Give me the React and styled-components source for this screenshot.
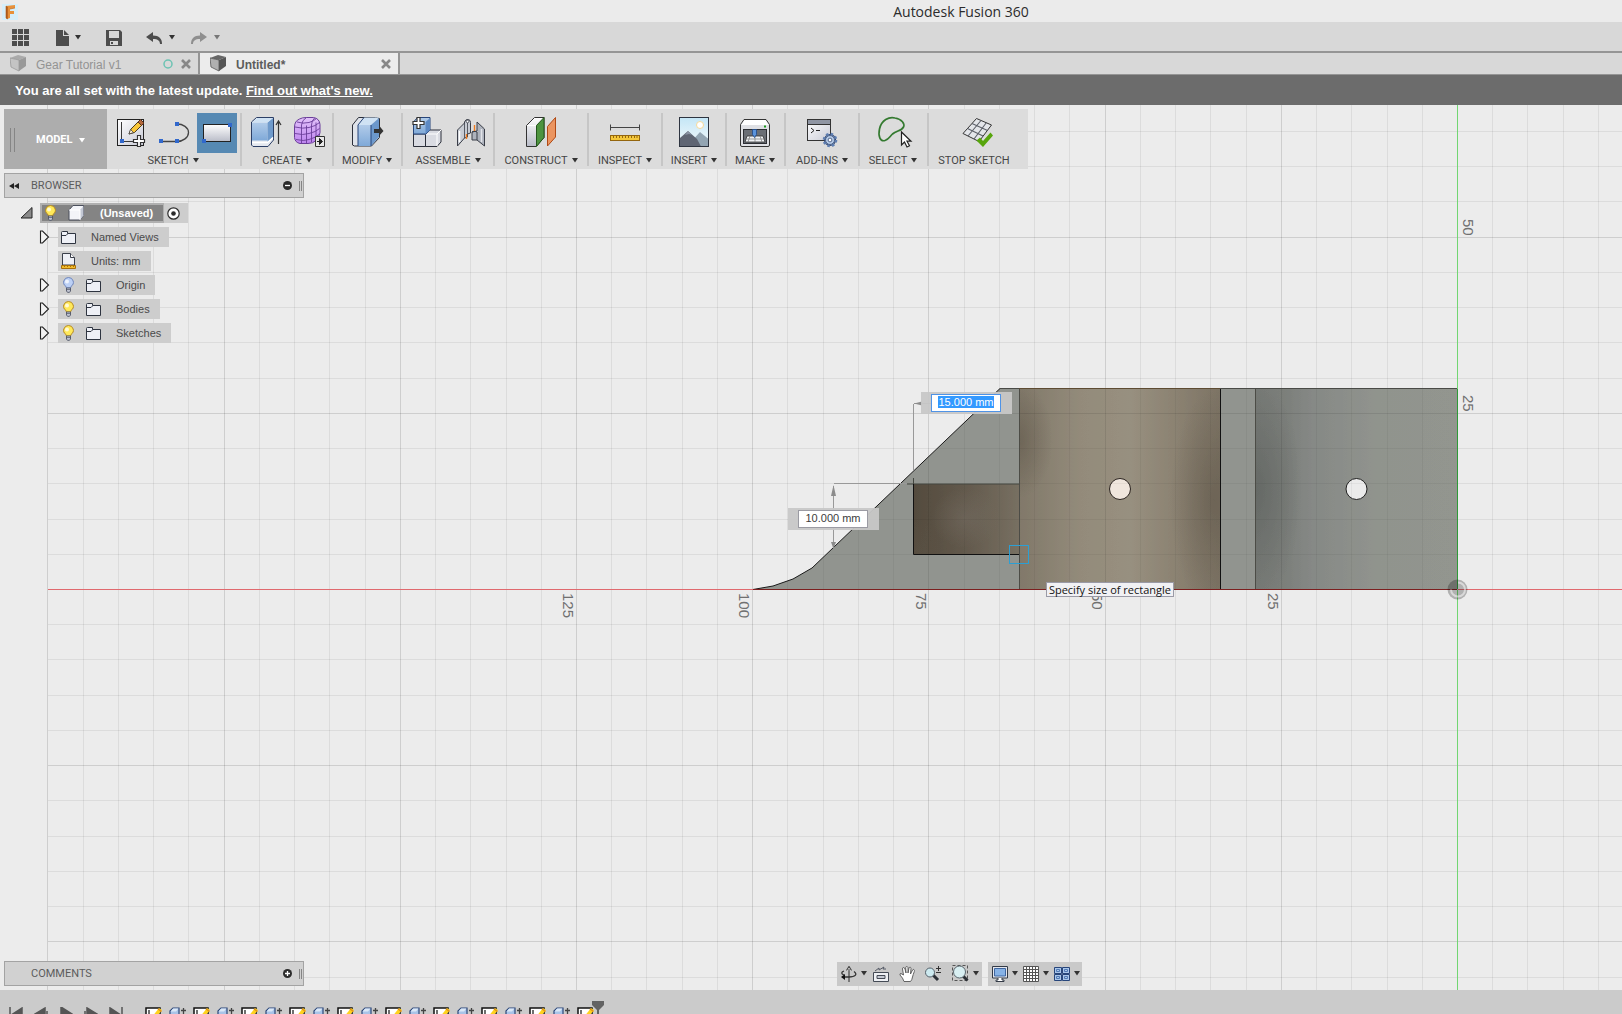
import React, { useEffect, useRef } from "react";
import styled, { createGlobalStyle } from "styled-components";

const GlobalStyle = createGlobalStyle`
  * { box-sizing: border-box; }
  body { margin: 0; font-family: "Liberation Sans", Arial, sans-serif; }
  button { font: inherit; color: inherit; background: none; border: 0; padding: 0; margin: 0; }
  svg { display: block; flex: none; }
`;

const Page = styled.div`
  display: flex;
  flex-direction: column;
  height: 100vh;
  overflow: hidden;
  background: #ececec;
`;

/* ---------- window chrome ---------- */

const TitleBar = styled.header`
  display: grid;
  grid-template-columns: 298px 1fr;
  align-items: center;
  height: 22px;
  background: #ebebeb;
  padding-left: 2px;
`;
const Title = styled.h1`
  margin: 0;
  text-align: center;
  font: 400 14px/24px "Open Sans", "Noto Sans", sans-serif;
  color: #2b2b2b;
`;
const QuickBar = styled.nav`
  display: flex;
  align-items: center;
  height: 29px;
  padding: 2px 0 0 12px;
  background: #d8d8d8;
`;
const QuickButton = styled.button`
  display: flex;
  align-items: center;
  gap: ${(p) => p.$gap || 6}px;
  margin-right: ${(p) => p.$after}px;
  color: ${(p) => (p.$muted ? "#8f8f8f" : "#4d4d4d")};
`;
const TabStrip = styled.div`
  display: flex;
  height: 24px;
  border-top: 2px solid #959595;
  border-bottom: 1px solid #959595;
  background: #d8d8d8;
`;
const Tab = styled.div`
  display: flex;
  align-items: center;
  width: 200px;
  padding: 0 7px 0 10px;
  border-right: 2px solid #959595;
  background: ${(p) => (p.$active ? "#ececec" : "#d8d8d8")};
`;
const TabName = styled.button`
  display: flex;
  align-items: center;
  gap: 9px;
  flex: 1;
  font-size: 12px;
  line-height: 20px;
  font-weight: ${(p) => (p.$active ? 700 : 400)};
  color: ${(p) => (p.$active ? "#5c5c5c" : "#939393")};
`;
const TabText = styled.span`
  padding-top: 3px;
`;
const CloseButton = styled.button`
  margin-left: 8px;
`;
const Banner = styled.p`
  margin: 0;
  padding-left: 15px;
  height: 30px;
  font-size: 13px;
  line-height: 31px;
  font-weight: 700;
  color: #fff;
  background: #6c6c6c;
  a { color: inherit; }
`;

/* ---------- modelling area ---------- */

const Workspace = styled.main`
  position: relative;
  flex: 1;
  min-height: 0;
  display: grid;
  grid-template: minmax(0, 1fr) / minmax(0, 1fr);
  overflow: hidden;
  > * { grid-area: 1 / 1; }
`;
const Scene = styled.svg`
  width: 100%;
  height: 100%;
  text { font: 15px "Liberation Sans", Arial, sans-serif; fill: #707070; }
`;
const Overlay = styled.div`
  display: flex;
  flex-direction: column;
  align-items: flex-start;
  padding: 4px;
  z-index: 1;
`;
const Ribbon = styled.div`
  display: flex;
  height: 60px;
  padding-right: 9px;
  margin-bottom: 4px;
  background: #dcdcdc;
`;
const ModeButton = styled.button`
  display: flex;
  align-items: center;
  width: 103px;
  padding: 2px 0 0 6px;
  gap: 6px;
  background: #adadad;
  color: #fff;
  font: 700 11px/14px Roboto, sans-serif;
`;
const Grip = styled.span`
  width: ${(p) => p.$w || 5}px;
  height: ${(p) => p.$h || 24}px;
  border: solid #858585;
  border-width: 0 1px;
`;
const ModeName = styled.span`
  margin-left: 15px;
`;
const Group = styled.section`
  display: flex;
  flex-direction: column;
  align-items: center;
  width: ${(p) => p.$width}px;
  margin: 4px 0 3px;
  padding-right: ${(p) => p.$width % 2}px;
  border-right: ${(p) => (p.$last ? "0" : "2px solid #c6c6c6")};
`;
const Tools = styled.div`
  display: flex;
  gap: 4px;
`;
const Tool = styled.button`
  width: 40px;
  height: 40px;
  background: ${(p) => (p.$on ? "#5689b3" : "transparent")};
`;
const GroupLabel = styled.button`
  display: flex;
  align-items: center;
  gap: 4px;
  font: 400 11px/15px Roboto, sans-serif;
  color: #454545;
  white-space: nowrap;
`;
const Panel = styled.div`
  display: flex;
  align-items: center;
  width: 300px;
  height: 25px;
  padding: 0 1px 0 4px;
  border: 1px solid #a3a3a3;
  background: #d1d1d1;
  font: 400 11px/14px Roboto, sans-serif;
  color: #5c5c5c;
`;
const PanelArrows = styled.button`
  width: 22px;
`;
const PanelName = styled.h2`
  flex: 1;
  margin: 0;
  font: inherit;
`;
const PanelToggle = styled.button`
  margin-right: 7px;
`;
const Tree = styled.ul`
  list-style: none;
  margin: 5px 0 0;
  padding: 0;
  display: flex;
  flex-direction: column;
  gap: 4px;
`;
const Row = styled.li`
  display: flex;
  align-items: center;
  height: 20px;
  padding-left: ${(p) => (p.$root ? 16 : 35)}px;
  font-size: 11px;
  line-height: 20px;
`;
const Expander = styled.button`
  width: ${(p) => (p.$root ? 20 : 19)}px;
  height: 14px;
`;
const RowBody = styled.div`
  display: flex;
  align-items: center;
  height: 20px;
  gap: 10px;
  padding-left: 3px;
  padding-right: 10px;
  background: #cdcdcd;
  color: #4a4a4a;
`;
const RowText = styled.span`
  margin-left: 5px;
`;
const RootBody = styled(RowBody)`
  gap: 0;
  padding: 2px 8px 2px 2px;
  background: linear-gradient(90deg, #b0b0b0 0 124px, #cdcdcd 124px);
`;
const RootName = styled.div`
  display: flex;
  align-items: center;
  gap: 10px;
  height: 16px;
  padding-right: 10px;
  padding-left: 1px;
  margin-right: 4px;
  background: #848484;
  color: #fff;
  font-weight: 700;
`;
const BottomRow = styled.div`
  display: flex;
  align-self: stretch;
  align-items: center;
  margin-top: auto;
`;
const NavArea = styled.div`
  display: flex;
  flex: 1;
  justify-content: center;
  gap: 6px;
  padding-right: 4px;
`;
const NavGroup = styled.div`
  display: flex;
  height: 24px;
  background: #c9c9c9;
`;
const NavButton = styled.button`
  display: flex;
  align-items: center;
  justify-content: center;
  gap: 4px;
  width: ${(p) => p.$width}px;
  padding-left: ${(p) => (p.$width > 26 ? 3 : 1)}px;
`;

/* On-canvas controls are pinned to the sketch origin, which follows the right edge. */
const Dimension = styled.label`
  position: absolute;
  z-index: 2;
  right: ${(p) => p.$right}px;
  top: ${(p) => p.$top}px;
  display: flex;
  width: 91px;
  height: 22px;
  padding: 2px 11px 2px 10px;
  background: rgba(200, 200, 200, 0.94);
`;
const DimensionInput = styled.input`
  width: 70px;
  height: 18px;
  padding: 0 0 2px;
  text-align: center;
  font: 11px/14px "Liberation Sans", Arial, sans-serif;
  color: #3c3c3c;
  background: #fff;
  border: 1px solid #9b9ba3;
  outline: none;
  &:focus { border-color: #4f93e6; }
  &::selection { background: #3399ff; color: #fff; }
`;
const Hint = styled.div`
  position: absolute;
  z-index: 2;
  right: 448px;
  top: 477px;
  height: 15px;
  padding: 0 2px;
  border: 1px solid #9a9aa6;
  background: #f1f1f4;
  color: #111;
  font: 11px/13px "Open Sans", "Noto Sans", sans-serif;
  white-space: nowrap;
`;

/* ---------- timeline ---------- */

const Timeline = styled.footer`
  display: flex;
  align-items: flex-start;
  height: 24px;
  padding: 11px 0 0 3px;
  overflow: hidden;
  background: #cbcbcb;
`;
const PlayButton = styled.button`
  display: flex;
  justify-content: center;
  width: 25px;
  padding-top: 6px;
`;
const Features = styled.div`
  display: flex;
  padding-left: 14px;
`;
const Feature = styled.button`
  display: flex;
  width: 24px;
  padding: 6px 0 0 3px;
`;
const Marker = styled.div`
  margin-left: -6px;
`;

/* ---------- glyphs ---------- */

const Caret = ({ color = "#333" }) => (
  <svg width="6" height="5"><path d="M0 0h6L3 4.5z" fill={color} /></svg>
);

const Cube = ({ front, side, top }) => (
  <svg width="17" height="17" viewBox="0 0 17 17">
    <path d="M0 3 8 0l8 2-7 3z" fill={top} />
    <path d="M0 3l9 2v11l-8-4z" fill={front} stroke={side} strokeWidth=".8" />
    <path d="M9 5l7-3v9l-7 5z" fill={side} />
  </svg>
);
const Cross = () => (
  <svg width="10" height="10"><path d="M1 1l8 8M9 1L1 9" stroke="#888" strokeWidth="2.6" /></svg>
);
const Bulb = ({ lit = true }) => (
  <svg width="15" height="16" viewBox="-1 0 15 16">
    <path d="M4 9.500C1.500 8 1.200 5.500 1.800 4A4.900 4.900 0 0 1 11.200 4c.7 2-.2 4.200-2.200 5.500L8.500 11h-4z"
      fill={lit ? "#ffe95a" : "#bcd0f5"} stroke={lit ? "#b78a22" : "#6f86bd"} />
    <ellipse cx="5" cy="4.500" rx="2" ry="2" fill="#fff" opacity=".75" />
    <path d="M4.500 11h4v3l-1 1.300h-2l-1-1.300z" fill="#c9cedb" stroke="#4f5566" strokeWidth=".9" />
    <path d="M4.500 12.600h4" stroke="#4f5566" strokeWidth=".8" />
  </svg>
);
const Folder = () => (
  <svg width="15" height="13" viewBox="0 0 15 13">
    <path d="M.5 12.500V1.500q0-1 1-1H6.500v2h8v10z" fill="#eef0f6" stroke="#2e3440" />
    <path d="M.5 4.500H5L7 2.500" fill="none" stroke="#2e3440" />
  </svg>
);
const UnitsIcon = () => (
  <svg width="15" height="16" viewBox="0 0 15 16">
    <path d="M1.500 12V.5h8l4 4V12z" fill="#eef0f6" stroke="#3a3f4a" />
    <path d="M9.500.5v4h4" fill="#fff" stroke="#3a3f4a" />
    <path d="M.5 12.500h14v3H.5z" fill="#f3bd2c" stroke="#a8700c" />
    <path d="M3.500 12v2M6.500 12v2M9.500 12v2M12.500 12v2" stroke="#a8700c" />
  </svg>
);
const BodyIcon = () => (
  <svg width="17" height="16" viewBox="0 0 17 16">
    <path d="M1 5l4-4.500h10.500v10L12 15H1z" fill="#f3f4f8" stroke="#4a4f5c" />
    <path d="M12 15V5l3.500-4v9.500z" fill="#c3c8d4" />
    <path d="M1 5h11V15" fill="none" stroke="#fff" />
  </svg>
);

const Dot = ({ x, y }) => <rect x={x - 2} y={y - 2} width="4" height="4" fill="#3168cc" />;
const Plus = ({ x, y }) => (
  <path transform={`translate(${x} ${y})`} d="M-1.500-5.500h3v4h4v3h-4v4h-3v-4h-4v-3h4z" fill="#fff" stroke="#333" strokeWidth="1.200" />
);

const Defs = () => (
  <defs>
    <linearGradient id="metal" x1="0" y1="0" x2="0" y2="1"><stop stopColor="#fff" /><stop offset="1" stopColor="#b9bcc8" /></linearGradient>
    <linearGradient id="paper" x1="0" y1="0" x2="1" y2="1"><stop stopColor="#fff" /><stop offset="1" stopColor="#c9cbd6" /></linearGradient>
    <linearGradient id="blue" x1="0" y1="0" x2="0" y2="1"><stop stopColor="#b1cbe9" /><stop offset="1" stopColor="#7fa9d8" /></linearGradient>
    <linearGradient id="violet" x1="0" y1="0" x2="0" y2="1"><stop stopColor="#e2c2fa" /><stop offset="1" stopColor="#bd83ef" /></linearGradient>
    <linearGradient id="sky" x1="0" y1="0" x2="0" y2="1"><stop stopColor="#c4e6f6" /><stop offset="1" stopColor="#f5fafc" /></linearGradient>
  </defs>
);

const art = {
  sketch: (
    <>
      <rect x="8.500" y="6.500" width="26" height="26" fill="url(#paper)" stroke="#222" />
      <path d="M12.500 9v19.500H31" fill="none" stroke="#3a3a3a" />
      <Dot x={13} y={28} />
      <path d="M20 21l2-5 9.500-9.500 3.500 3.500-9.500 9.500z" fill="#f8c63a" stroke="#4a3a20" />
      <path d="M29 9l2.500-2.500 3.500 3.500-2.500 2.500z" fill="#b5683c" stroke="#5a3420" />
      <path d="M20 21l1.500-4.500 3 3z" fill="#fff4da" stroke="#333" strokeWidth=".7" />
      <Plus x={30} y={28} />
    </>
  ),
  line: (
    <>
      <path d="M8 28.500h16c6 0 11.500-4 11.500-9S30 11 24 11" fill="none" stroke="#444" strokeWidth="1.300" />
      <Dot x={8} y={28} /><Dot x={24} y={28} /><Dot x={24} y={11} />
    </>
  ),
  rect: (
    <>
      <rect x="6.500" y="11.500" width="27" height="17" fill="url(#metal)" stroke="#222" />
      <Dot x={33} y={12} /><Dot x={7} y={28} />
    </>
  ),
  extrude: (
    <>
      <path d="M6.500 9l5-4.500h17V27l-5.500 6.500H8L6.500 32z" fill="#e4e8ef" stroke="#2c3f66" />
      <path d="M7 9.500h15.500v18H7z" fill="url(#blue)" />
      <path d="M22.500 9.500L28 5v19l-5.500 5z" fill="#6f9acb" />
      <path d="M7 9.500L12 5h16l-5.500 4.500z" fill="#cfe2f4" />
      <path d="M7 29.500h15.500l5.500-5" fill="none" stroke="#fff" strokeWidth="1.400" />
      <path d="M33.500 31V9M31 12l2.500-4 2.500 4" fill="none" stroke="#333" strokeWidth="1.200" />
    </>
  ),
  form: (
    <>
      <path d="M5.500 14q0-6 5-8 2.500-1.500 7-1.500h7q6 1 6.500 7v8q-.5 5-4 8-3 3-8 3h-8q-5-1-5.500-6z" fill="url(#violet)" stroke="#6a3d99" />
      <path d="M6 14q8 2 14 .5 7-1.500 10.500-5M6 20.500q8 2 14 0 7-1.500 10.500-5M7 26.500q8 2 13 0 7-2 10-5M12.500 12v18M17.500 12.500v18M22.500 12v17M27 9.500v17M8 9q6 2 12 .5 5-1.500 7.500-4M12.500 12q.5-5 5-7.500M22.500 12q0-4 3-7" fill="none" stroke="#6a3d99" strokeWidth=".9" />
      <path d="M26.500 23.500h9v10h-9z" fill="#e8e8e8" stroke="#333" />
      <path d="M28 28.500h5M30.500 25.500l3 3-3 3z" stroke="#222" fill="#222" />
    </>
  ),
  modify: (
    <>
      <path d="M5.500 12l6-7.500h17l4 1v19l-8 8.500h-17l-2-1z" fill="#dfe3ea" stroke="#2b2f3a" />
      <path d="M11 12h13v21H11z" fill="url(#blue)" />
      <path d="M11 12l6-7.500h15L24 12z" fill="#cfe2f4" />
      <path d="M24 12l8-7v19l-8 9z" fill="#6c98cc" />
      <path d="M11 33V12l6-7.500M24 33V12" fill="none" stroke="#27457a" />
      <path d="M27 16h5v-3.500l4.500 5.500-4.500 5v-3h-5z" fill="#333" />
    </>
  ),
  component: (
    <>
      <path d="M7.500 21h12v12.500h-12zM19.500 21l3.500-4h12v12l-4 4.500H19.500z" fill="#d9dbe2" stroke="#2b2f3a" />
      <path d="M19.500 21H31l4-4M31 21v12" fill="none" stroke="#fff" />
      <path d="M7.500 9l4-4.500h12.500V17l-4 4H7.500z" fill="url(#blue)" stroke="#27457a" />
      <path d="M19.500 9l4.500-4v12l-4.500 4z" fill="#5d8ac4" />
      <Plus x={12.500} y={10} />
    </>
  ),
  joint: (
    <>
      <path d="M7.500 17l7-7V9q1-3 4-2.500 2 .5 2 3V20l-3 1v3l-3 1-7 8z" fill="#c8ccd4" stroke="#3a3e48" />
      <path d="M9.500 18v11" stroke="#fff" strokeWidth="1.500" />
      <path d="M14.500 10v15M17.500 10v11" fill="none" stroke="#3a3e48" strokeWidth=".8" />
      <path d="M34.500 16l-7.500-7v9l-5 1v8h5l7.500 6z" fill="#aeb3bd" stroke="#3a3e48" />
      <path d="M22 19q2-2 5 0v8" fill="none" stroke="#3a3e48" />
      <path d="M31.500 16v13" stroke="#e2e4e9" strokeWidth="1.500" />
      <path d="M24.500 12v6M16.500 21v5" stroke="#ee7a1e" strokeWidth="1.400" />
      <circle cx="17.500" cy="8.500" r="1.300" fill="#fff" stroke="#3a3e48" strokeWidth=".8" />
    </>
  ),
  plane: (
    <>
      <path d="M5.500 12.500l8-8h9.500v20l-8 9H5.500z" fill="url(#metal)" stroke="#333" />
      <path d="M15.500 12.500l7.500-8v20l-7.500 9z" fill="#4d9440" stroke="#24551d" />
      <path d="M6 12.500h9" stroke="#fff" />
      <path d="M26.500 13.500l8-9V24l-8 9z" fill="#eb9560" stroke="#b04a16" />
    </>
  ),
  measure: (
    <>
      <path d="M5.500 11.500v6M34.500 11.500v6M6 14.500h28" stroke="#444" fill="none" />
      <rect x="5.500" y="22.500" width="29" height="5" fill="#f4c73a" stroke="#94660f" />
      <path d="M8.500 23v2M11.500 23v2M14.500 23v2M17.500 23v2M20.500 23v2M23.500 23v2M26.500 23v2M29.500 23v2M32 23v2" stroke="#94660f" />
    </>
  ),
  image: (
    <>
      <rect x="5.500" y="4.500" width="29" height="29" fill="url(#sky)" />
      <circle cx="26" cy="12" r="3.500" fill="#fff" stroke="#f6d998" />
      <path d="M17 29l9-10 8.500 7v7.500H15z" fill="#93a5b3" />
      <path d="M6 25l8-7 9 8 4 7.500H6z" fill="#5f6573" />
      <path d="M11 22l3-4 4 4-3-1z" fill="#8a93a3" />
      <rect x="5.500" y="4.500" width="29" height="29" fill="none" stroke="#2e3440" />
    </>
  ),
  print: (
    <>
      <path d="M9 6.500h22l3.500 5V32q0 1.500-1.500 1.500H7Q5.500 33.500 5.500 32V11.500z" fill="#dfe0e4" stroke="#333" />
      <path d="M9.500 7h21l3 5h-27z" fill="#fff" />
      <rect x="8.500" y="16.500" width="23" height="14" fill="#6a6e75" stroke="#2d2f34" />
      <path d="M12 23h16l2 6H10z" fill="#eff1f4" stroke="#333" strokeWidth=".8" />
      <path d="M11 26h18M15 23l-2 6M20 23v6M25 23l2 6" stroke="#777" strokeWidth=".7" />
      <path d="M17.500 16.500h4v5l-2 3-2-3z" fill="#5b94dd" stroke="#1f4a8c" strokeWidth=".8" />
      <path d="M29 12.500h2v2h-2z" fill="#1a9a1a" />
    </>
  ),
  addins: (
    <>
      <rect x="5.500" y="6.500" width="23" height="21" fill="url(#paper)" stroke="#333" />
      <path d="M6 7h22v4H6z" fill="#8f95a3" />
      <path d="M6 11.500h22" stroke="#333" />
      <path d="M9 15l3 2.500L9 20M14 17.500h4" fill="none" stroke="#222" />
      <circle cx="28" cy="27" r="5.500" fill="#dae6f6" stroke="#2d4470" strokeWidth="1.200" />
      <circle cx="28" cy="27" r="6" fill="none" stroke="#5f7fb3" strokeWidth="2.600" strokeDasharray="2.400 2.312" />
      <circle cx="28" cy="27" r="4.500" fill="#b6cbe8" stroke="#2d4470" strokeWidth=".8" />
      <circle cx="28" cy="27" r="1.900" fill="#fff" stroke="#2d4470" strokeWidth=".8" />
    </>
  ),
  select: (
    <>
      <path d="M12 27.500C7 29 5 23 6.500 16 8.500 7 16 3.500 22 5c7 1 10 6 8.500 9-2 4-7 3.500-11 7-3 3-4 5.500-7.500 6.500z" fill="none" stroke="#347a30" strokeWidth="1.700" />
      <path d="M28.500 19v13l3-3 2.500 5 2.500-1.200-2.500-4.600h4z" fill="#fff" stroke="#222" strokeWidth="1.200" />
    </>
  ),
  finish: (
    <>
      <path d="M22.500 5.500l15 6.500L25 28.500 9 20.500z" fill="#e4e6ea" stroke="#333" />
      <path d="M27 7.500L14 23M32.500 9.500L20 26M18 10.500l15.500 7M13.500 15.500L29 23" stroke="#5c6068" strokeWidth="1.100" />
      <path d="M22.500 27.500l3.500-3 3 3.500 7.500-8.500 2.500 3L29 34z" fill="#57a50c" />
    </>
  ),
};

const ToolIcon = ({ name }) => <svg width="40" height="40" viewBox="0 0 40 40">{art[name]}</svg>;

const groups = [
  { label: "SKETCH", width: 135, tools: ["sketch", "line", "rect"] },
  { label: "CREATE", width: 92, tools: ["extrude", "form"] },
  { label: "MODIFY", width: 69, tools: ["modify"] },
  { label: "ASSEMBLE", width: 92, tools: ["component", "joint"] },
  { label: "CONSTRUCT", width: 94, tools: ["plane"] },
  { label: "INSPECT", width: 74, tools: ["measure"] },
  { label: "INSERT", width: 64, tools: ["image"] },
  { label: "MAKE", width: 59, tools: ["print"] },
  { label: "ADD-INS", width: 74, tools: ["addins"] },
  { label: "SELECT", width: 69, tools: ["select"] },
  { label: "STOP SKETCH", width: 90, tools: ["finish"], last: true },
];

const rows = [
  { label: "Named Views", icons: [<Folder key="f" />], open: true },
  { label: "Units: mm", icons: [<UnitsIcon key="u" />] },
  { label: "Origin", icons: [<Bulb key="b" lit={false} />, <Folder key="f" />], open: true },
  { label: "Bodies", icons: [<Bulb key="b" />, <Folder key="f" />], open: true },
  { label: "Sketches", icons: [<Bulb key="b" />, <Folder key="f" />], open: true },
];

/* ---------- drawing ---------- */

const OX = 1457.5;
const OY = 589.5;
const STEP = 35.24;
const snap = (v) => Math.floor(v) + 0.5;

function Grid({ opacity = 1 }) {
  const out = [];
  for (let k = -4; k <= 40; k++) {
    const x = snap(OX - k * STEP);
    out.push(<path key={`v${k}`} d={`M${x} 105V1400`} stroke="#000" strokeOpacity={k % 5 ? 0.065 : 0.125} />);
  }
  for (let k = -20; k <= 13; k++) {
    const y = snap(OY - k * STEP);
    out.push(<path key={`h${k}`} d={`M48 ${y}H1622`} stroke="#000" strokeOpacity={k % 5 ? 0.065 : 0.125} />);
  }
  return <g opacity={opacity}>{out}</g>;
}

const AxisLabel = ({ x, y, children }) => <text transform={`translate(${x} ${y}) rotate(90)`}>{children}</text>;

function Model() {
  return (
    <Scene aria-label="Sketch view">
      <defs>
        <linearGradient id="brown"><stop stopColor="#81796a" /><stop offset=".3" stopColor="#938b7b" /><stop offset=".55" stopColor="#989080" /><stop offset=".78" stopColor="#8b8272" /><stop offset="1" stopColor="#7d7465" /></linearGradient>
        <linearGradient id="grey"><stop stopColor="#787b77" /><stop offset=".14" stopColor="#7c7f7b" /><stop offset=".28" stopColor="#868986" /><stop offset=".6" stopColor="#91948e" /><stop offset="1" stopColor="#93968f" /></linearGradient>
        <linearGradient id="pocket"><stop stopColor="#544b3e" /><stop offset=".5" stopColor="#635a4d" /><stop offset="1" stopColor="#787062" /></linearGradient>
        <radialGradient id="shade"><stop stopColor="#5c5346" stopOpacity=".5" /><stop offset="1" stopColor="#5c5346" stopOpacity="0" /></radialGradient>
        <radialGradient id="shadeGrey"><stop stopColor="#5a5e5b" stopOpacity=".6" /><stop offset="1" stopColor="#5a5e5b" stopOpacity="0" /></radialGradient>
        <radialGradient id="glow"><stop stopColor="#787066" stopOpacity=".45" /><stop offset="1" stopColor="#787066" stopOpacity="0" /></radialGradient>
        <clipPath id="c1"><path d="M1019 388h202v201h-202z" /></clipPath>
        <clipPath id="c2"><path d="M1256 388h202v201h-202z" /></clipPath>
        <clipPath id="c3"><path d="M913 484h106v70H913z" /></clipPath>
        <clipPath id="body"><path d="M753 589.500L773 586 793 579 812 568 1000 388.500H1457V589.500z" /></clipPath>
      </defs>
      <svg x="100%" overflow="visible">
        <g transform="translate(-1622 -105)">
          <Grid />
          <path d="M753 589.500L773 586 793 579 812 568 1000 388.500H1457V589.500z" fill="#92958f" />
          <g clipPath="url(#c1)">
            <path d="M1019 388h202v201h-202z" fill="url(#brown)" />
            <ellipse cx="1019" cy="440" rx="34" ry="58" fill="url(#shade)" />
            <ellipse cx="1214" cy="500" rx="44" ry="110" fill="url(#shade)" />
          </g>
          <g clipPath="url(#c2)">
            <path d="M1256 388h202v201h-202z" fill="url(#grey)" />
            <ellipse cx="1256" cy="490" rx="46" ry="110" fill="url(#shadeGrey)" />
          </g>
          <g clipPath="url(#c3)">
            <path d="M913 484h106v70H913z" fill="url(#pocket)" />
            <ellipse cx="965" cy="518" rx="34" ry="30" fill="url(#glow)" />
            <ellipse cx="918" cy="550" rx="30" ry="30" fill="url(#shade)" />
          </g>
          <circle cx="1120" cy="489" r="10.500" fill="#f0e6dd" stroke="#2b2420" />
          <circle cx="1356.500" cy="489" r="10.500" fill="#ececec" stroke="#222" />
          <g clipPath="url(#body)"><Grid opacity={0.7} /></g>
          <path d="M753 589.500L773 586 793 579 812 568 1000 388.500" fill="none" stroke="#1a1a1a" />
          <path d="M1000 388.500h457" stroke="#4a4b47" />
          <path d="M1019.500 389v200M1255.500 389v200" stroke="#4c4c46" />
          <path d="M1220.500 389v200" stroke="#111" />
          <path d="M1019 388.500h201" stroke="#5e4c33" />
          <path d="M907 484h112M913.500 478v6" stroke="#444740" />
          <path d="M913.500 484v70.500H1019" fill="none" stroke="#111" />

          <path d="M834 483.500h73M913.500 404v66M833.500 486v60M914 403.500h20" stroke="#999" fill="none" />
          <path d="M833.500 485l2.500 11h-5zM833.500 549l2.500-7h-5zM914 403.500l8-2v4z" fill="#8c8c8c" />

          <path d="M48 589.500h705M1458 589.500h164" stroke="#e0696e" />
          <path d="M753 589.500h704" stroke="#7c1f1f" />
          <path d="M1457.500 105v284M1457.500 590v900" stroke="#72d672" />
          <path d="M1457.500 389v200" stroke="#2f9a38" />
          <circle cx="1457.500" cy="589.500" r="10" fill="#000" fillOpacity=".25" />
          <path d="M1458 582.500a7 7 0 1 1-7 7" fill="none" stroke="#fff" strokeOpacity=".5" strokeWidth="2" />
          <rect x="1009.500" y="545.500" width="19" height="18" fill="none" stroke="#2b9fd4" />

          <AxisLabel x={1463} y={219}>50</AxisLabel>
          <AxisLabel x={1463} y={395}>25</AxisLabel>
          <AxisLabel x={1268} y={593}>25</AxisLabel>
          <AxisLabel x={1092} y={593}>50</AxisLabel>
          <AxisLabel x={916} y={593}>75</AxisLabel>
          <AxisLabel x={739} y={593}>100</AxisLabel>
          <AxisLabel x={563} y={593}>125</AxisLabel>
        </g>
      </svg>
    </Scene>
  );
}

/* ---------- navigation icons ---------- */

const nav = {
  orbit: <svg width="16" height="16"><path d="M8 16V3M5.500 4.500L8 .5l2.500 4" fill="#fff" stroke="#444" strokeWidth="1.200" /><path d="M13 5.500c4 3 1 5.500-5 5.500H2M3 5C0 6 0 8 3 9" fill="none" stroke="#333" strokeWidth="1.300" /><path d="M0 11l4-3v6z" fill="#111" /></svg>,
  look: <svg width="16" height="16"><path d="M.5 6.500h15v9H.5z" fill="#eef0f4" stroke="#444a55" /><path d="M4 9.500h8v3H4z" fill="#c6cad4" stroke="#444a55" /><path d="M2 5l4-3v2l5-3-1 2h3" fill="none" stroke="#555a66" /></svg>,
  hand: <svg width="17" height="16" viewBox="0 0 17 16"><path d="M5 15.500Q4 12 1 9q-.5-1.500 1-1.500L4.500 9 3.500 3q0-1.500 1-1.500T6 3l1 4-.3-5.500Q7 .4 7.800.5T9 1.500V7l1-5q.5-1 1.200-.8t.8 1.300L11.500 8l2-4q.8-1 1.500-.3t.3 1.800Q14 9 13.500 11q-.5 3-2 4.500z" fill="#fff" stroke="#555" strokeWidth=".9" /></svg>,
  zoom: <svg width="16" height="16"><path d="M8 9l5 5" stroke="#2c3036" strokeWidth="3" /><circle cx="5" cy="6.500" r="4.500" fill="#cdeaf0" stroke="#54606a" /><path d="M11 2.500h5M13.500 0v5M11 6.500h5" stroke="#333" /></svg>,
  window: <svg width="17" height="17"><path d="M.5.5h15v15H.5z" fill="none" stroke="#555" strokeDasharray="3 2" /><path d="M11 11l4.500 4.500" stroke="#2c3036" strokeWidth="3" /><circle cx="7.500" cy="7" r="6" fill="#d8eff2" stroke="#5a666e" /></svg>,
  display: <svg width="16" height="16"><path d="M.5.5h15v11.500H.5z" fill="#e4e6ec" stroke="#333a46" /><path d="M2.500 2.500h11v7.500h-11z" fill="#86b2e6" stroke="#3f66a0" /><path d="M6 12v2H4v1.500h8V14h-2v-2" fill="#fff" stroke="#333a46" /></svg>,
  grid: <svg width="16" height="16"><path d="M.5.5h15v15H.5z" fill="#fff" /><path d="M.5.500h15v15H.5zM3.500 0v16M6.500 0v16M9.500 0v16M12.500 0v16M0 3.500h16M0 6.500h16M0 9.500h16M0 12.500h16" fill="none" stroke="#555" /></svg>,
  views: <svg width="16" height="14"><path d="M.5.500h7v6h-7zM8.500.500h7v6h-7zM.5 7.500h7v6h-7zM8.500 7.500h7v6h-7z" fill="#a9c6ea" stroke="#27457a" /><path d="M2.500 2.500h3v2h-3zM10.500 2.500h3v2h-3zM2.500 9.500h3v2h-3zM10.500 9.500h3v2h-3z" fill="none" stroke="#5079b4" /></svg>,
};

const SketchFeature = () => (
  <svg width="17" height="17"><rect x="1" y="1" width="14" height="15" fill="#fff" stroke="#111" strokeWidth="1.500" /><path d="M4 3v12M6 14l4-6" stroke="#333" strokeWidth="1.400" /><path d="M7 10l7-9 3 2-7 9z" fill="#ffd21f" /><path d="M13 2l3.500 2.500" stroke="#e08b1a" strokeWidth="1.200" /></svg>
);
const ExtrudeFeature = () => (
  <svg width="17" height="17"><path d="M1 4l3-3h6v12l-3 3H1z" fill="#a9c4e8" stroke="#2c4678" strokeWidth="1.200" /><path d="M1.500 4.500h5.500L9.500 1.500H4z" fill="#dbe8f7" /><path d="M14.500 16V1M12 3.500h5" fill="none" stroke="#444" strokeWidth="1.300" /></svg>
);

const transport = [
  ["First", "M1 0v14M13 1v13L3 7.500z"],
  ["Previous", "M11 1v13L0 7.500zM13 4v8"],
  ["Play", "M2 0l11 7-11 7z"],
  ["Next", "M1 4v8M3 1l11 6.500L3 14z"],
  ["Last", "M1 1l10 6.500L1 14zM13 0v14"],
];

export default function App() {
  const widthInput = useRef(null);
  useEffect(() => {
    widthInput.current.focus();
    widthInput.current.select();
  }, []);

  return (
    <Page>
      <GlobalStyle />
      <TitleBar>
        <svg width="16" height="16">
          <rect width="16" height="16" fill="#d5eefa" />
          <path d="M4 2l9-1v3l-5 1v2h4v3H8v4l-3 1-1-1z" fill="#e8913a" />
          <path d="M4 2l1.500 1v12L4 14zM8 5l5-1" fill="#a9561b" stroke="#b5611e" strokeWidth=".6" />
        </svg>
        <Title>Autodesk Fusion 360</Title>
      </TitleBar>

      <QuickBar>
        <QuickButton $after={27} aria-label="Data panel">
          <svg width="17" height="17" fill="currentColor">
            {[0, 6, 12].map((y) => [0, 6, 12].map((x) => <rect key={`${x}-${y}`} x={x} y={y} width="5" height="5" />))}
          </svg>
        </QuickButton>
        <QuickButton $after={25} aria-label="File">
          <svg width="13" height="16" fill="currentColor"><path d="M0 0h7v6h6v10H0z" /><path d="M8 0l5 5H8z" /></svg>
          <Caret />
        </QuickButton>
        <QuickButton $after={24} aria-label="Save">
          <svg width="16" height="16"><path d="M0 0h14l2 2v14H0z" fill="#4d4d4d" /><path d="M3 1h10v7H3zM4 11h8v4H4z" fill="#d8d8d8" /><path d="M5 12h2v2H5z" fill="#4d4d4d" /></svg>
        </QuickButton>
        <QuickButton $gap={7} $after={16} aria-label="Undo">
          <svg width="16" height="12" fill="currentColor"><path d="M0 5l7-5v3.500c6 0 9 3 9 8.500h-2c0-3-2-5-7-5V10z" /></svg>
          <Caret />
        </QuickButton>
        <QuickButton $gap={7} $after={0} $muted aria-label="Redo">
          <svg width="16" height="12" fill="currentColor"><path d="M16 5L9 0v3.500C3 3.500 0 6.500 0 12h2c0-3 2-5 7-5V10z" /></svg>
          <Caret color="#777" />
        </QuickButton>
      </QuickBar>

      <TabStrip>
        <Tab>
          <TabName>
            <Cube front="#c4c4c4" side="#999" top="#aaa" />
            <TabText>Gear Tutorial v1</TabText>
          </TabName>
          <svg width="10" height="10"><circle cx="5" cy="5" r="4" fill="none" stroke="#6cc3b3" strokeWidth="1.500" /></svg>
          <CloseButton aria-label="Close Gear Tutorial v1"><Cross /></CloseButton>
        </Tab>
        <Tab $active>
          <TabName $active>
            <Cube front="#b0b0b0" side="#555" top="#666" />
            <TabText>Untitled*</TabText>
          </TabName>
          <CloseButton aria-label="Close Untitled"><Cross /></CloseButton>
        </Tab>
      </TabStrip>

      <Banner>
        You are all set with the latest update. <a href="#new">Find out what's new.</a>
      </Banner>

      <Workspace>
        <Model />
        <Overlay>
          <Ribbon>
            <svg width="0" height="0"><Defs /></svg>
            <ModeButton>
              <Grip />
              <ModeName>MODEL</ModeName>
              <Caret color="#fff" />
            </ModeButton>
            {groups.map((g) => (
              <Group key={g.label} $width={g.width} $last={g.last}>
                <Tools>
                  {g.tools.map((t) => (
                    <Tool key={t} $on={t === "rect"} aria-label={t}><ToolIcon name={t} /></Tool>
                  ))}
                </Tools>
                <GroupLabel>{g.label}{!g.last && <Caret />}</GroupLabel>
              </Group>
            ))}
          </Ribbon>

          <Panel>
            <PanelArrows aria-label="Collapse browser">
              <svg width="10" height="6"><path d="M5 0v6L0 3zM10 0v6L5 3z" fill="#222" /></svg>
            </PanelArrows>
            <PanelName>BROWSER</PanelName>
            <PanelToggle aria-label="Hide browser">
              <svg width="9" height="9"><circle cx="4.500" cy="4.500" r="4.500" fill="#2b2b2b" /><path d="M2 4.500h5" stroke="#fff" strokeWidth="1.300" /></svg>
            </PanelToggle>
            <Grip $w={3} $h={10} />
          </Panel>

          <Tree>
            <Row $root>
              <Expander $root aria-label="Collapse">
                <svg width="13" height="14"><path d="M12 1.500v10.500H1z" fill="#8a8a8a" stroke="#222" /></svg>
              </Expander>
              <RootBody>
                <RootName>
                  <Bulb />
                  <BodyIcon />
                  <RowText>(Unsaved)</RowText>
                </RootName>
                <svg width="13" height="13"><circle cx="6.500" cy="6.500" r="5.700" fill="#fff" stroke="#2b2b2b" strokeWidth="1.200" /><circle cx="6.500" cy="6.500" r="2.300" fill="#2b2b2b" /></svg>
              </RootBody>
            </Row>
            {rows.map((r) => (
              <Row key={r.label}>
                <Expander aria-label={`Expand ${r.label}`}>
                  {r.open && <svg width="11" height="14"><path d="M1.500 1v12h2L9.500 7 3.500 1z" fill="#f2f2f2" stroke="#222" strokeWidth="1.100" /></svg>}
                </Expander>
                <RowBody>
                  {r.icons}
                  <RowText>{r.label}</RowText>
                </RowBody>
              </Row>
            ))}
          </Tree>

          <BottomRow>
            <Panel>
              <PanelArrows as="span" />
              <PanelName>COMMENTS</PanelName>
              <PanelToggle aria-label="Show comments">
                <svg width="9" height="9"><circle cx="4.500" cy="4.500" r="4.500" fill="#2b2b2b" /><path d="M2 4.500h5M4.500 2v5" stroke="#fff" strokeWidth="1.300" /></svg>
              </PanelToggle>
              <Grip $w={3} $h={10} />
            </Panel>
            <NavArea>
              <NavGroup>
                <NavButton $width={31} aria-label="Orbit">{nav.orbit}<Caret /></NavButton>
                <NavButton $width={26} aria-label="Look at">{nav.look}</NavButton>
                <NavButton $width={26} aria-label="Pan">{nav.hand}</NavButton>
                <NavButton $width={26} aria-label="Zoom">{nav.zoom}</NavButton>
                <NavButton $width={36} aria-label="Zoom window">{nav.window}<Caret /></NavButton>
              </NavGroup>
              <NavGroup>
                <NavButton $width={31} aria-label="Display">{nav.display}<Caret /></NavButton>
                <NavButton $width={31} aria-label="Grid">{nav.grid}<Caret /></NavButton>
                <NavButton $width={32} aria-label="Viewports">{nav.views}<Caret /></NavButton>
              </NavGroup>
            </NavArea>
          </BottomRow>
        </Overlay>

        <Dimension $right={610} $top={287}>
          <DimensionInput ref={widthInput} aria-label="Width" defaultValue="15.000 mm" />
        </Dimension>
        <Dimension $right={743} $top={403}>
          <DimensionInput aria-label="Height" defaultValue="10.000 mm" />
        </Dimension>
        <Hint role="tooltip">Specify size of rectangle</Hint>
      </Workspace>

      <Timeline>
        {transport.map(([name, d]) => (
          <PlayButton key={name} aria-label={name}>
            <svg width="14" height="14"><path d={d} fill="#555" stroke="#555" strokeWidth="1.500" /></svg>
          </PlayButton>
        ))}
        <Features>
          {Array.from({ length: 19 }, (_, i) => (
            <Feature key={i} aria-label={i % 2 ? `Extrude ${i}` : `Sketch ${i}`}>
              {i % 2 ? <ExtrudeFeature /> : <SketchFeature />}
            </Feature>
          ))}
          <Marker>
            <svg width="12" height="20"><path d="M0 0h12v4L7 9v11H5V9L0 4z" fill="#636363" /></svg>
          </Marker>
        </Features>
      </Timeline>
    </Page>
  );
}
